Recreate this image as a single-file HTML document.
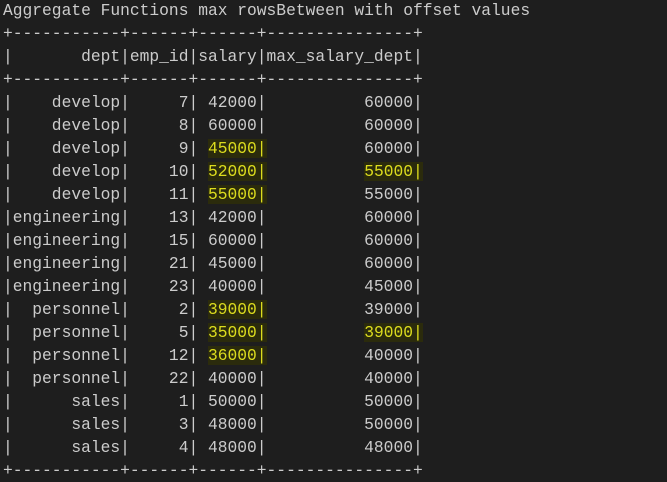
<!DOCTYPE html>
<html><head><meta charset="utf-8"><style>
html,body{margin:0;padding:0;background:#1e1e1e;width:667px;height:476px;overflow:hidden}
pre{margin:0;position:absolute;left:3px;top:-1px;font-family:"Liberation Mono",monospace;font-size:16.27px;line-height:23px;color:#cccccc}
.h{color:#dcdc1e;background:#2b2b0c}
</style></head><body><pre>Aggregate Functions max rowsBetween with offset values
+-----------+------+------+---------------+
|       dept|emp_id|salary|max_salary_dept|
+-----------+------+------+---------------+
|    develop|     7| 42000|          60000|
|    develop|     8| 60000|          60000|
|    develop|     9| <span class="h">45000|</span>          60000|
|    develop|    10| <span class="h">52000|</span>          <span class="h">55000|</span>
|    develop|    11| <span class="h">55000|</span>          55000|
|engineering|    13| 42000|          60000|
|engineering|    15| 60000|          60000|
|engineering|    21| 45000|          60000|
|engineering|    23| 40000|          45000|
|  personnel|     2| <span class="h">39000|</span>          39000|
|  personnel|     5| <span class="h">35000|</span>          <span class="h">39000|</span>
|  personnel|    12| <span class="h">36000|</span>          40000|
|  personnel|    22| 40000|          40000|
|      sales|     1| 50000|          50000|
|      sales|     3| 48000|          50000|
|      sales|     4| 48000|          48000|
+-----------+------+------+---------------+</pre></body></html>
